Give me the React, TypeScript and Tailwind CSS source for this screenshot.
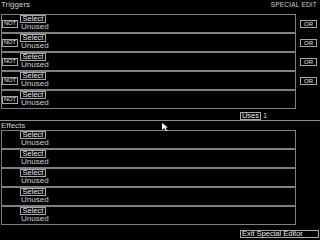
import React from "react";

const btn =
  "border border-[#a8a8a8] text-[#e8e8e8] flex items-center justify-center leading-none overflow-visible whitespace-nowrap";

function TriggerRow({ or }: { or: boolean }) {
  return (
    <div className="flex items-center h-[19px]">
      <div className="ml-[1px] w-[295px] h-[19px] border border-[#808080] flex items-start">
        <div className={`${btn} mt-[5px] w-[16px] h-[8px] text-[5.8px]`}>NOT</div>
        <div className="ml-[2px] flex flex-col">
          <div className={`${btn} w-[26px] h-[8px] text-[7.5px]`}>Select</div>
          <div className="pl-[1px] text-[8px] leading-[8px] text-[#d0d0d0]">Unused</div>
        </div>
      </div>
      {or && (
        <div className={`${btn} ml-[4px] w-[17px] h-[8px] text-[6px]`}>OR</div>
      )}
    </div>
  );
}

function EffectRow() {
  return (
    <div className="ml-[1px] w-[295px] h-[19px] border border-[#808080] flex items-start">
      <div className="ml-[18px] flex flex-col">
        <div className={`${btn} w-[26px] h-[8px] text-[7.5px]`}>Select</div>
        <div className="pl-[1px] text-[8px] leading-[8px] text-[#d0d0d0]">Unused</div>
      </div>
    </div>
  );
}

export default function App() {
  return (
    <div
      className="relative w-[320px] h-[240px] bg-black overflow-hidden text-[#d0d0d0] leading-none"
      style={{ fontFamily: '"Liberation Sans", Arial, sans-serif' }}
    >
      <div className="flex justify-between h-[14px] pt-[1px] px-[1px]">
        <span className="text-[8px]">Triggers</span>
        <span className="text-[6.5px] pt-[1px] pr-[2px] tracking-[0.2px]">SPECIAL EDIT</span>
      </div>
      <div className="flex flex-col">
        {[0, 1, 2, 3, 4].map((i) => (
          <TriggerRow key={i} or={i < 4} />
        ))}
      </div>
      <div className="flex items-center h-[11px] pt-[3px] pl-[240px]">
        <div className={`${btn} w-[21px] h-[8px] text-[7.5px]`}>Uses</div>
        <span className="ml-[2px] text-[7.5px]">1</span>
      </div>
      <div className="h-px bg-[#909090]" />
      <div className="h-[9px] pt-[1px] pl-[1px] text-[8px]">Effects</div>
      <div className="flex flex-col">
        {[0, 1, 2, 3, 4].map((i) => (
          <EffectRow key={i} />
        ))}
      </div>
      <div className="mt-[5px] ml-[240px]">
        <div className={`${btn} w-[79px] h-[8px] text-[7.5px] justify-start pl-[1px]`}>
          Exit Special Editor
        </div>
      </div>
      <svg
        className="absolute left-[162px] top-[123px]"
        width="8"
        height="9"
        viewBox="0 0 8 9"
      >
        <path d="M0 0 L0 7 L2 5 L4 8 L5 7.5 L3.5 4.5 L6 4.5 Z" fill="#ffffff" />
      </svg>
    </div>
  );
}
